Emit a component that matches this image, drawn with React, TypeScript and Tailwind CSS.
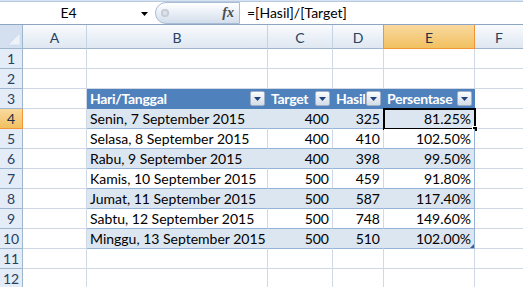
import React from "react";

type Row = { label: string; target: number; hasil: number; pct: string };

const data: Row[] = [
  { label: "Senin, 7 September 2015", target: 400, hasil: 325, pct: "81.25%" },
  { label: "Selasa, 8 September 2015", target: 400, hasil: 410, pct: "102.50%" },
  { label: "Rabu, 9 September 2015", target: 400, hasil: 398, pct: "99.50%" },
  { label: "Kamis, 10 September 2015", target: 500, hasil: 459, pct: "91.80%" },
  { label: "Jumat, 11 September 2015", target: 500, hasil: 587, pct: "117.40%" },
  { label: "Sabtu, 12 September 2015", target: 500, hasil: 748, pct: "149.60%" },
  { label: "Minggu, 13 September 2015", target: 500, hasil: 510, pct: "102.00%" },
];

const gridCols = "grid grid-cols-[23px_64px_181px_65px_51px_91px_1fr]";

function RowHead({ n, active }: { n: number; active?: boolean }) {
  return (
    <div
      className={
        active
          ? "flex items-center justify-center border-r border-b border-[#f29536] bg-linear-to-b from-[#f9d99f] to-[#f1c15f] text-[#1f2f47]"
          : "flex items-center justify-center border-r border-b border-[#9eb6ce] bg-[#e4ecf7] text-[#27415f]"
      }
    >
      {n}
    </div>
  );
}

function Empty({ last }: { last?: boolean }) {
  return <div className={last ? "border-b border-[#d0d7e5]" : "border-r border-b border-[#d0d7e5]"} />;
}

function FilterBtn() {
  return (
    <span className="flex h-[15px] w-[15px] shrink-0 items-center justify-center rounded-[2px] border border-[#9fb0c8] bg-linear-to-b from-[#fbfcfd] to-[#d5dde8]">
      <svg width="7" height="4" viewBox="0 0 7 4">
        <path d="M0 0h7L3.5 4z" fill="#1f3f7f" />
      </svg>
    </span>
  );
}

function HeadCell({ label }: { label: string }) {
  return (
    <div className="flex items-center justify-between gap-[1px] pl-[3px] pr-[2px] bg-[#4f81bd] font-bold tracking-[-0.3px] text-white border-b border-r border-[#4f81bd]">
      <span className="whitespace-nowrap">{label}</span>
      <FilterBtn />
    </div>
  );
}

function DataCell({
  children,
  band,
  right,
  last,
}: {
  children: React.ReactNode;
  band: boolean;
  right?: boolean;
  last?: boolean;
}) {
  const bg = band ? "bg-[#dce6f1]" : "bg-white";
  const br = last ? "border-r-[#95b3d7]" : band ? "border-r-[#dce6f1]" : "border-r-[#d0d7e5]";
  return (
    <div
      className={`flex items-center whitespace-nowrap border-r border-b border-b-[#95b3d7] ${br} ${bg} ${
        right ? "justify-end pr-[3px]" : "pl-[3px]"
      }`}
    >
      {children}
    </div>
  );
}

export default function App() {
  return (
    <div className="h-[287px] w-[523px] overflow-hidden bg-white text-[14px] leading-none text-black font-['Lato',sans-serif]">
      {/* formula bar */}
      <div className="h-[25px] border-b border-[#8da4c3] bg-[#d5e2f1] pt-[1px]">
        <div className="flex h-[23px] border-t border-[#b9c9de] bg-white">
          <div className="flex w-[155px] items-center">
            <div className="w-[137px] text-center">E4</div>
            <svg width="8" height="4" viewBox="0 0 8 4" className="ml-[4px] mt-[2px]">
              <path d="M0 0h7L3.5 4z" fill="#000" />
            </svg>
          </div>
          <div className="flex w-[85px] items-center justify-between rounded-l-full border border-[#a9bcd5] bg-linear-to-b from-white to-[#d3deec] pl-[5px] pr-[5px]">
            <span className="h-[8px] w-[8px] rounded-full bg-radial from-[#e9edf2] to-[#aab4c2]" />
            <span className="font-['Liberation_Serif',serif] text-[14px] font-bold italic text-[#4a4a4a]">
              fx
            </span>
          </div>
          <div className="flex items-center pl-[7px]">=[Hasil]/[Target]</div>
        </div>
      </div>

      {/* column headers */}
      <div className={`${gridCols} h-[24px]`}>
        <div className="relative border-r border-b border-[#9eb6ce] bg-[#d4e0ef]">
          <svg width="23" height="24" viewBox="0 0 23 24" className="absolute inset-0">
            <path d="M8 20L20 8V20z" fill="#eef3fa" stroke="#c3d2e6" strokeWidth="0.5" />
          </svg>
        </div>
        {["A", "B", "C", "D"].map((c) => (
          <div
            key={c}
            className={
              "flex items-center justify-center pt-[2px] border-r border-b border-b-[#9eb6ce] bg-linear-to-b from-[#f9fbfd] to-[#dfe7f1] text-[#27415f] " +
              (c === "D" ? "border-r-[#f29536]" : "border-r-[#c5d2e3]")
            }
          >
            {c}
          </div>
        ))}
        <div className="flex items-center justify-center pt-[2px] border-r border-b border-[#f29536] bg-linear-to-b from-[#f9d99f] to-[#f1c15f] text-[#1f2f47]">
          E
        </div>
        <div className="flex items-center justify-center pt-[2px] border-b border-[#9eb6ce] bg-linear-to-b from-[#f9fbfd] to-[#dfe7f1] text-[#27415f]">
          F
        </div>
      </div>

      {/* rows 1-2 */}
      {[1, 2].map((n) => (
        <div key={n} className={`${gridCols} h-[20px]`}>
          <RowHead n={n} />
          <Empty />
          <Empty />
          <Empty />
          <Empty />
          <Empty />
          <Empty last />
        </div>
      ))}

      {/* row 3: table header */}
      <div className={`${gridCols} h-[20px]`}>
        <RowHead n={3} />
        <Empty />
        <HeadCell label="Hari/Tanggal" />
        <HeadCell label="Target" />
        <HeadCell label="Hasil" />
        <HeadCell label="Persentase" />
        <Empty last />
      </div>

      {/* data rows */}
      {data.map((r, i) => {
        const band = i % 2 === 0;
        const selected = i === 0;
        const lastRow = i === data.length - 1;
        return (
          <div key={r.label} className={`${gridCols} h-[20px]`}>
            <RowHead n={i + 4} active={selected} />
            <Empty />
            <DataCell band={band}>{r.label}</DataCell>
            <DataCell band={band} right>
              {r.target}
            </DataCell>
            <DataCell band={band} right>
              {r.hasil}
            </DataCell>
            <div className="relative grid">
              <DataCell band={band} right last>
                {r.pct}
              </DataCell>
              {selected && (
                <>
                  <div className="absolute -top-[1px] -left-[1px] right-[-1px] bottom-[-1px] border-2 border-black" />
                  <div className="absolute -right-[3px] -bottom-[3px] h-[6px] w-[6px] border border-white bg-black" />
                </>
              )}
              {lastRow && (
                <svg width="4" height="4" viewBox="0 0 4 4" className="absolute right-[1px] bottom-[1px]">
                  <path d="M4 0V4H0z" fill="#3a5f9a" />
                </svg>
              )}
            </div>
            <Empty last />
          </div>
        );
      })}

      {/* rows 11-12 */}
      {[11, 12].map((n) => (
        <div key={n} className={`${gridCols} h-[20px]`}>
          <RowHead n={n} />
          <Empty />
          <Empty />
          <Empty />
          <Empty />
          <Empty />
          <Empty last />
        </div>
      ))}
    </div>
  );
}
